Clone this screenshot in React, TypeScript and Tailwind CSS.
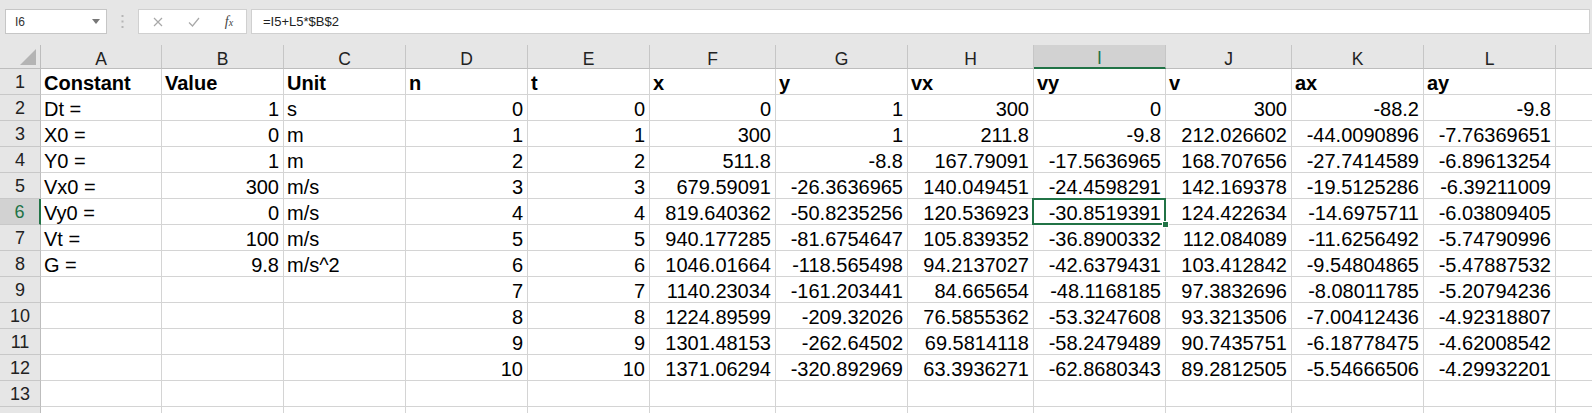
import React from "react";

const colLetters = ["A", "B", "C", "D", "E", "F", "G", "H", "I", "J", "K", "L"];

const data: string[][] = [
  ["Constant", "Value", "Unit", "n", "t", "x", "y", "vx", "vy", "v", "ax", "ay"],
  ["Dt =", "1", "s", "0", "0", "0", "1", "300", "0", "300", "-88.2", "-9.8"],
  ["X0 =", "0", "m", "1", "1", "300", "1", "211.8", "-9.8", "212.026602", "-44.0090896", "-7.76369651"],
  ["Y0 =", "1", "m", "2", "2", "511.8", "-8.8", "167.79091", "-17.5636965", "168.707656", "-27.7414589", "-6.89613254"],
  ["Vx0 =", "300", "m/s", "3", "3", "679.59091", "-26.3636965", "140.049451", "-24.4598291", "142.169378", "-19.5125286", "-6.39211009"],
  ["Vy0 =", "0", "m/s", "4", "4", "819.640362", "-50.8235256", "120.536923", "-30.8519391", "124.422634", "-14.6975711", "-6.03809405"],
  ["Vt =", "100", "m/s", "5", "5", "940.177285", "-81.6754647", "105.839352", "-36.8900332", "112.084089", "-11.6256492", "-5.74790996"],
  ["G =", "9.8", "m/s^2", "6", "6", "1046.01664", "-118.565498", "94.2137027", "-42.6379431", "103.412842", "-9.54804865", "-5.47887532"],
  ["", "", "", "7", "7", "1140.23034", "-161.203441", "84.665654", "-48.1168185", "97.3832696", "-8.08011785", "-5.20794236"],
  ["", "", "", "8", "8", "1224.89599", "-209.32026", "76.5855362", "-53.3247608", "93.3213506", "-7.00412436", "-4.92318807"],
  ["", "", "", "9", "9", "1301.48153", "-262.64502", "69.5814118", "-58.2479489", "90.7435751", "-6.18778475", "-4.62008542"],
  ["", "", "", "10", "10", "1371.06294", "-320.892969", "63.3936271", "-62.8680343", "89.2812505", "-5.54666506", "-4.29932201"],
  ["", "", "", "", "", "", "", "", "", "", "", ""],
  ["", "", "", "", "", "", "", "", "", "", "", ""],
];

const isNum = (s: string) => s !== "" && !isNaN(Number(s));

export default function App() {
  return (
    <div className="w-[1592px] h-[413px] overflow-hidden bg-white font-['Liberation_Sans',Arial,sans-serif] text-black">
      {/* formula bar */}
      <div className="h-[45px] bg-[#e6e6e6] flex items-start pt-[9px] pl-[5px] pr-[2px] gap-0">
        <div className="w-[102px] h-[25px] bg-white border border-[#c6c6c6] flex items-center justify-between pl-[9px] pr-[6px] text-[12px] text-[#333]">
          <span>I6</span>
          <svg width="8" height="5" viewBox="0 0 8 5">
            <path d="M0 0 L8 0 L4 5 Z" fill="#777" />
          </svg>
        </div>
        <div className="w-[31px] h-[25px] flex items-center justify-center">
          <svg width="3" height="13" viewBox="0 0 3 13">
            <rect x="0.5" y="0" width="2" height="2" fill="#b5b5b5" />
            <rect x="0.5" y="5.5" width="2" height="2" fill="#b5b5b5" />
            <rect x="0.5" y="11" width="2" height="2" fill="#b5b5b5" />
          </svg>
        </div>
        <div className="w-[109px] h-[25px] bg-white border border-[#d0d0d0] flex items-center">
          <div className="w-[37px] flex justify-center">
            <svg width="10" height="10" viewBox="0 0 10 10">
              <path d="M1 1 L9 9 M9 1 L1 9" stroke="#a8a8a8" strokeWidth="1.2" />
            </svg>
          </div>
          <div className="w-[36px] flex justify-center">
            <svg width="12" height="10" viewBox="0 0 12 10">
              <path d="M1 5.5 L4.5 9 L11 1" stroke="#a8a8a8" strokeWidth="1.2" fill="none" />
            </svg>
          </div>
          <div className="w-[34px] flex justify-center font-['Liberation_Serif',serif] italic text-[14px] text-[#444] leading-none">
            f<span className="text-[10px] relative top-[3px]">x</span>
          </div>
        </div>
        <div className="ml-[4px] flex-1 h-[25px] bg-white border border-[#d0d0d0] flex items-center pl-[11px] text-[13px] text-[#222]">
          =I5+L5*$B$2
        </div>
      </div>

      {/* grid */}
      <div className="grid grid-cols-[41px_121px_122px_122px_122px_122px_126px_132px_126px_132px_126px_132px_132px_1fr]">
        <div className="h-[24px] bg-[#e6e6e6] border-r border-b border-[#bdbdbd] relative">
          <svg className="absolute right-[4px] bottom-[3px]" width="16" height="16" viewBox="0 0 16 16">
            <path d="M16 0 L16 16 L0 16 Z" fill="#b4b4b4" />
          </svg>
        </div>
        {colLetters.map((c) => {
          const sel = c === "I";
          return (
            <div
              key={c}
              className={
                sel
                  ? "h-[24px] bg-[#d2d2d2] border-r border-[#c6c6c6] border-b-2 border-b-[#217346] text-center text-[17.5px] leading-[27px] text-[#217346]"
                  : "h-[24px] bg-[#e6e6e6] border-r border-b border-[#c6c6c6] border-b-[#bdbdbd] text-center text-[17.5px] leading-[28px] text-[#222]"
              }
            >
              {c}
            </div>
          );
        })}
        <div className="h-[24px] bg-[#e6e6e6] border-b border-[#bdbdbd]" />

        {data.map((row, ri) => {
          const rn = ri + 1;
          const selRow = rn === 6;
          return (
            <React.Fragment key={rn}>
              <div
                className={
                  selRow
                    ? "h-[26px] bg-[#d2d2d2] border-b border-[#c8c8c8] border-r-2 border-r-[#217346] text-center text-[18px] leading-[27px] text-[#217346]"
                    : "h-[26px] bg-[#e6e6e6] border-b border-[#c8c8c8] border-r border-r-[#bdbdbd] text-center text-[18px] leading-[27px] text-[#222]"
                }
              >
                {rn <= 13 ? rn : ""}
              </div>
              {row.map((v, ci) => {
                const right = isNum(v) && ri > 0;
                const selected = selRow && ci === 8;
                return (
                  <div
                    key={ci}
                    className={
                      "h-[26px] border-r border-b border-[#d4d4d4] overflow-visible whitespace-nowrap text-[20px] leading-[28px] relative " +
                      (right ? "text-right pr-[4px]" : "text-left pl-[3px]") +
                      (ri === 0 ? " font-bold" : "")
                    }
                  >
                    {v}
                    {selected && (
                      <div className="absolute -left-[2px] -top-[1px] -right-[1px] -bottom-[1px] border-2 border-[#217346] z-10">
                        <div className="absolute -right-[5px] -bottom-[5px] w-[7px] h-[7px] bg-[#217346] border border-white" />
                      </div>
                    )}
                  </div>
                );
              })}
              <div className="h-[26px] border-b border-[#d4d4d4]" />
            </React.Fragment>
          );
        })}
      </div>
    </div>
  );
}
